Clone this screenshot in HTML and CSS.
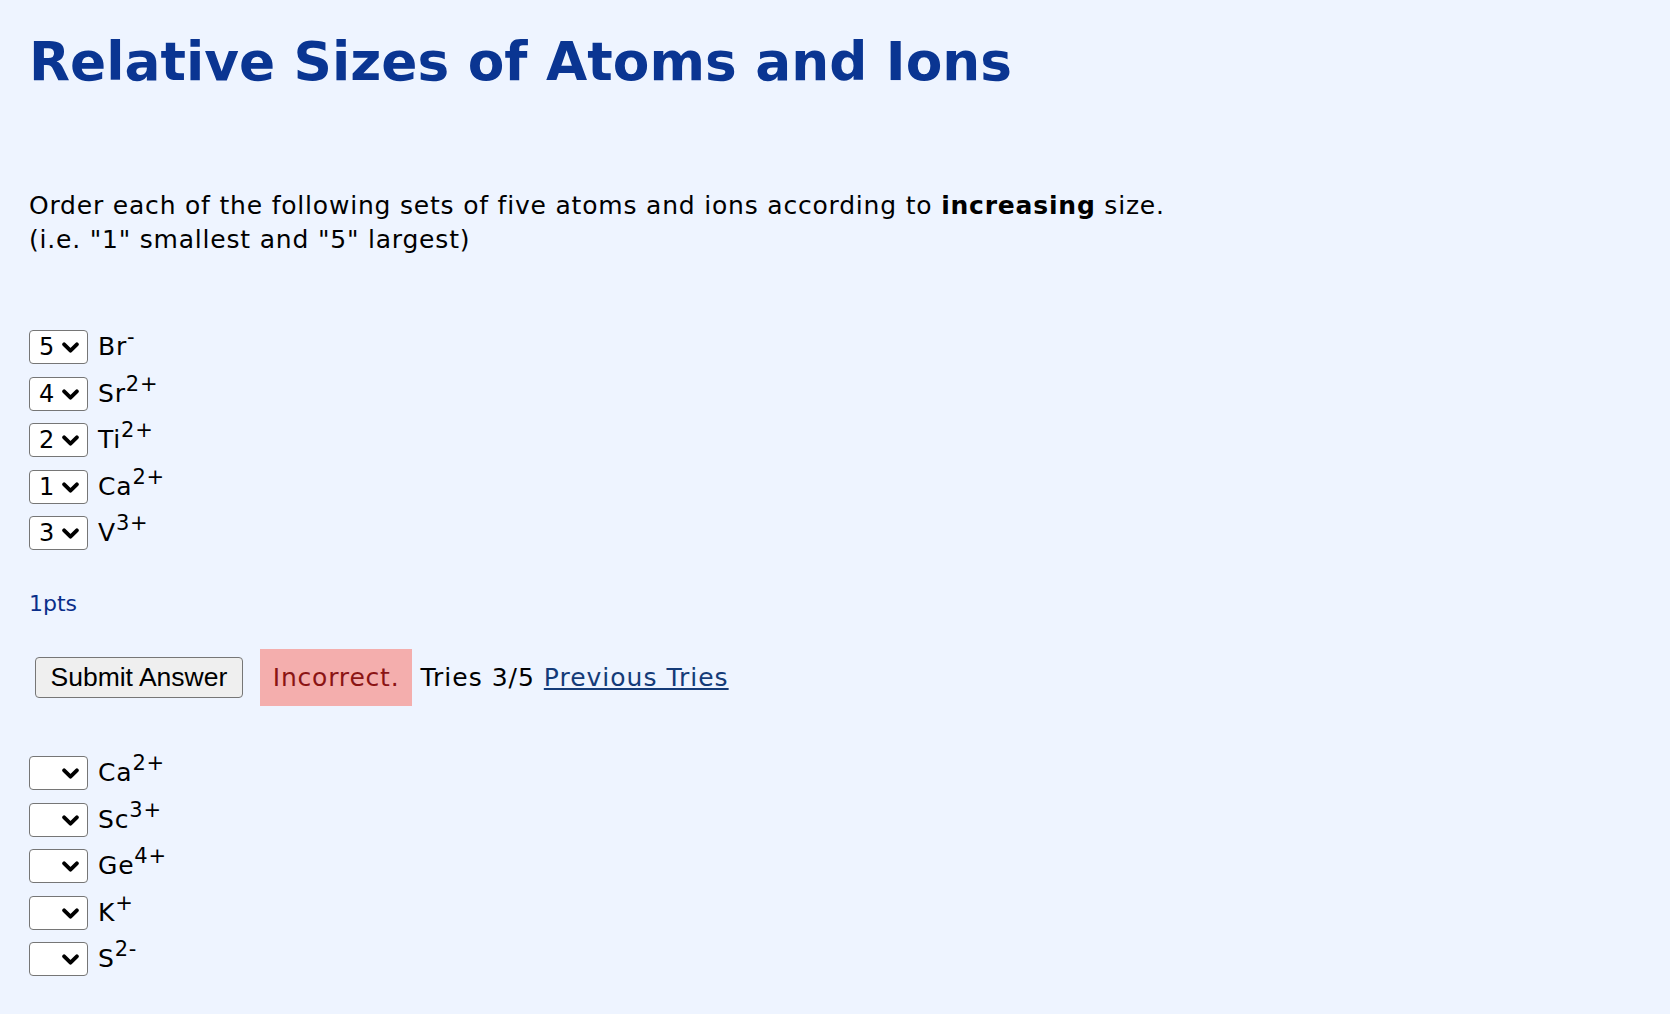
FILE: index.html
```html
<!DOCTYPE html>
<html lang="en">
<head>
<meta charset="utf-8">
<title>Relative Sizes of Atoms and Ions</title>
<link rel="stylesheet" href="styles.css">
</head>
<body>
<h1 class="title">Relative Sizes of Atoms and Ions</h1>
<p class="intro">Order each of the following sets of five atoms and ions according to <b>increasing</b> size.<br>(i.e. "1" smallest and "5" largest)</p>

<div class="set">
  <div class="row">
    <span class="sel"><select><option>5</option></select><svg class="chev" viewBox="0 0 16 10"><path d="M2 2l6 6 6-6" /></svg></span>
    <span class="ion">Br<sup>-</sup></span>
  </div>
  <div class="row">
    <span class="sel"><select><option>4</option></select><svg class="chev" viewBox="0 0 16 10"><path d="M2 2l6 6 6-6" /></svg></span>
    <span class="ion">Sr<sup>2+</sup></span>
  </div>
  <div class="row">
    <span class="sel"><select><option>2</option></select><svg class="chev" viewBox="0 0 16 10"><path d="M2 2l6 6 6-6" /></svg></span>
    <span class="ion">Ti<sup>2+</sup></span>
  </div>
  <div class="row">
    <span class="sel"><select><option>1</option></select><svg class="chev" viewBox="0 0 16 10"><path d="M2 2l6 6 6-6" /></svg></span>
    <span class="ion">Ca<sup>2+</sup></span>
  </div>
  <div class="row">
    <span class="sel"><select><option>3</option></select><svg class="chev" viewBox="0 0 16 10"><path d="M2 2l6 6 6-6" /></svg></span>
    <span class="ion">V<sup>3+</sup></span>
  </div>
</div>

<div class="pts">1pts</div>

<div class="submit-row">
  <button class="submit" type="button">Submit Answer</button>
  <span class="incorrect">Incorrect.</span>
  <span class="tries">Tries 3/5 <a href="#" class="prev">Previous Tries</a></span>
</div>

<div class="set set2">
  <div class="row">
    <span class="sel"><select><option></option></select><svg class="chev" viewBox="0 0 16 10"><path d="M2 2l6 6 6-6" /></svg></span>
    <span class="ion">Ca<sup>2+</sup></span>
  </div>
  <div class="row">
    <span class="sel"><select><option></option></select><svg class="chev" viewBox="0 0 16 10"><path d="M2 2l6 6 6-6" /></svg></span>
    <span class="ion">Sc<sup>3+</sup></span>
  </div>
  <div class="row">
    <span class="sel"><select><option></option></select><svg class="chev" viewBox="0 0 16 10"><path d="M2 2l6 6 6-6" /></svg></span>
    <span class="ion">Ge<sup>4+</sup></span>
  </div>
  <div class="row">
    <span class="sel"><select><option></option></select><svg class="chev" viewBox="0 0 16 10"><path d="M2 2l6 6 6-6" /></svg></span>
    <span class="ion">K<sup>+</sup></span>
  </div>
  <div class="row">
    <span class="sel"><select><option></option></select><svg class="chev" viewBox="0 0 16 10"><path d="M2 2l6 6 6-6" /></svg></span>
    <span class="ion">S<sup>2-</sup></span>
  </div>
</div>
</body>
</html>
```

FILE: styles.css
```css
html, body {
  background: #EEF4FF;
}
body {
  margin: 0;
  padding: 0 29px;
  font-family: "DejaVu Sans", Verdana, sans-serif;
  font-size: 25px;
  letter-spacing: 0.8px;
  color: #000;
  overflow: hidden;
}
.title {
  margin: 29px 0 0;
  font-size: 53.3px;
  line-height: 67px;
  letter-spacing: 0;
  font-weight: bold;
  color: #0A3592;
}
.intro {
  margin: 93px 0 0;
  line-height: 34px;
}
.set {
  margin-top: 73px;
  display: flex;
  flex-direction: column;
  gap: 12.5px;
}
.set2 {
  margin-top: 50px;
}
.row {
  display: flex;
  align-items: center;
  height: 34px;
}
.sel {
  position: relative;
  display: inline-block;
  width: 59px;
  height: 34px;
  flex: none;
}
.sel select {
  appearance: none;
  -webkit-appearance: none;
  width: 100%;
  height: 100%;
  margin: 0;
  padding: 0 0 0 9px;
  border: 1.5px solid #767676;
  border-radius: 4px;
  background: #fff;
  font-family: "DejaVu Sans", Verdana, sans-serif;
  font-size: 24px;
  color: #000;
}
.chev {
  position: absolute;
  left: 33px;
  top: 12px;
  width: 17px;
  height: 11px;
  fill: none;
  stroke: #000;
  stroke-width: 3.6;
  stroke-linecap: round;
  stroke-linejoin: round;
  pointer-events: none;
}
.ion {
  margin-left: 10px;
  line-height: 34px;
}
.ion sup {
  font-size: 21px;
  line-height: 0;
  vertical-align: 11px;
}
.pts {
  margin-top: 41px;
  font-size: 22px;
  line-height: 25px;
  letter-spacing: 0;
  color: #0A2E8A;
}
.submit-row {
  margin-top: 33px;
  display: flex;
  align-items: center;
  height: 57px;
}
.submit {
  margin-left: 6px;
  height: 41px;
  padding: 0 14.5px;
  border: 1.5px solid #767676;
  border-radius: 4px;
  background: #EFEFEF;
  font-family: "Liberation Sans", Arial, sans-serif;
  font-size: 26.5px;
  letter-spacing: 0;
  color: #000;
}
.incorrect {
  margin-left: 17px;
  height: 57px;
  padding: 0 13px;
  display: flex;
  align-items: center;
  background: #F4AEAD;
  color: #8B1414;
}
.tries {
  margin-left: 8px;
  letter-spacing: 1px;
}
.prev {
  color: #143B78;
  text-decoration: underline;
}
```
